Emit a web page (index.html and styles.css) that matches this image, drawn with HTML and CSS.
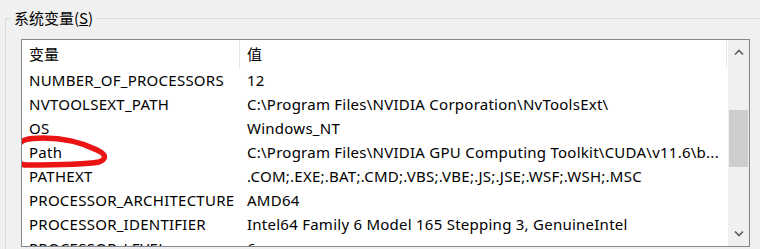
FILE: index.html
```html
<!DOCTYPE html>
<html lang="zh-CN">
<head>
    <meta charset="UTF-8">
    <title>系统变量</title>
    <link rel="stylesheet" href="styles.css">
</head>
<body>
    <fieldset class="group">
        <legend>系统变量(<u>S</u>)</legend>
        <div class="listview">
            <div class="list-main">
                <div class="list-head">
                    <div class="cell name">变量</div>
                    <div class="cell value">值</div>
                </div>
                <div class="row"><div class="cell name">NUMBER_OF_PROCESSORS</div><div class="cell value">12</div></div>
                <div class="row"><div class="cell name">NVTOOLSEXT_PATH</div><div class="cell value">C:\Program Files\NVIDIA Corporation\NvToolsExt\</div></div>
                <div class="row"><div class="cell name">OS</div><div class="cell value">Windows_NT</div></div>
                <div class="row"><div class="cell name">Path</div><div class="cell value">C:\Program Files\NVIDIA GPU Computing Toolkit\CUDA\v11.6\b...</div></div>
                <div class="row"><div class="cell name">PATHEXT</div><div class="cell value">.COM;.EXE;.BAT;.CMD;.VBS;.VBE;.JS;.JSE;.WSF;.WSH;.MSC</div></div>
                <div class="row"><div class="cell name">PROCESSOR_ARCHITECTURE</div><div class="cell value">AMD64</div></div>
                <div class="row"><div class="cell name">PROCESSOR_IDENTIFIER</div><div class="cell value">Intel64 Family 6 Model 165 Stepping 3, GenuineIntel</div></div>
                <div class="row"><div class="cell name">PROCESSOR_LEVEL</div><div class="cell value">6</div></div>
            </div>
            <div class="scrollbar">
                <div class="sb-btn">
                    <svg width="10" height="6" viewBox="0 0 10 6"><polyline points="1,5.5 5,1.5 9,5.5" fill="none" stroke="#606060" stroke-width="1.6"/></svg>
                </div>
                <div class="sb-track"><div class="sb-thumb"></div></div>
                <div class="sb-btn">
                    <svg width="10" height="6" viewBox="0 0 10 6"><polyline points="1,0.5 5,4.5 9,0.5" fill="none" stroke="#606060" stroke-width="1.6"/></svg>
                </div>
            </div>
            <!-- 手画的红圈 -->
            <svg class="mark" width="100" height="36" viewBox="0 0 100 36">
                <path d="M5 11 C 8 5, 14 3, 30 3 C 50 3, 70 8, 84 15 C 93 19, 94 24, 86 27 C 70 30, 40 30, 14 30 C 7 30, 3 27, 3 20 C 3 16, 4 13, 6 11" fill="none" stroke="#ea1414" stroke-width="5.5" stroke-linecap="round"/>
            </svg>
        </div>
    </fieldset>
</body>
</html>
```

FILE: styles.css
```css
html, body {
    height: 100%;
}

body {
    margin: 0;
    background: #f0f0f0;
    font-family: "Noto Sans", "Noto Sans CJK SC", sans-serif;
    font-size: 15px;
    color: #000;
    overflow: hidden;
}

.group {
    box-sizing: border-box;
    height: calc(100% - 8px);
    margin: 8px 0 0 5px;
    padding: 0 0 0 5px;
    border: 1px solid #dcdcdc;
    border-right: none;
    border-bottom: none;
}

.group legend {
    padding: 0 3px;
    line-height: 20px;
    font-family: "Noto Sans CJK SC", sans-serif;
}

.listview {
    position: relative;
    display: flex;
    width: 727px;
    height: 206px;
    margin: 11px 0 0 10px;
    border: 1px solid #828790;
    background: #fff;
    overflow: hidden;
}

.list-main {
    width: 706px;
}

.list-head {
    display: grid;
    grid-template-columns: 218px 487px;
    height: 28px;
}

.list-head .cell {
    border-right: 1px solid #e5e5e5;
    line-height: 28px;
    font-family: "Noto Sans CJK SC", sans-serif;
}

.row {
    display: grid;
    grid-template-columns: 218px 487px;
    height: 24px;
    line-height: 24px;
    letter-spacing: 0.25px;
}

.cell {
    padding-left: 7px;
    white-space: nowrap;
    overflow: hidden;
}

.scrollbar {
    display: flex;
    flex-direction: column;
    width: 21px;
    background: #f0f0f0;
}

.sb-btn {
    height: 24px;
    display: flex;
    align-items: center;
    justify-content: center;
}

.sb-track {
    flex: 1;
}

.sb-thumb {
    margin: 46px 1px 0 1px;
    height: 57px;
    background: #cdcdcd;
}

.mark {
    position: absolute;
    left: -9px;
    top: 95px;
}
```
